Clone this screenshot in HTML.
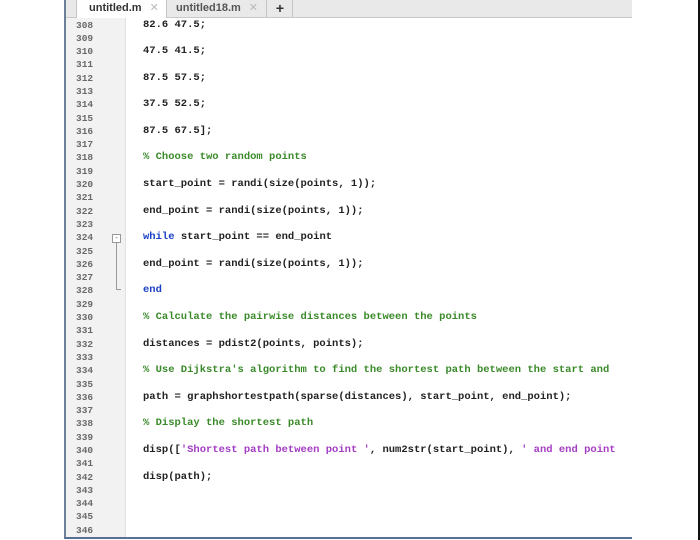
<!DOCTYPE html><html><head><style>
body{margin:0;width:700px;height:540px;background:#fff;position:relative;overflow:hidden;font-family:"Liberation Mono",monospace}
.frame{position:absolute;left:64px;top:0;width:567px;height:537px;border-left:2px solid #6d7f99;border-bottom:2px solid #5a6f94;border-right:1px solid #c8ccd2}
.tabs{position:absolute;left:66px;top:0;width:566px;height:17px;background:#e9e9e9;border-bottom:1px solid #c9c9c9}
.tab{position:absolute;top:0;height:17px;font:bold 11px "Liberation Sans",sans-serif;color:#333;line-height:16px;border-right:1px solid #c4c4c4}
.x{color:#bbb;font-weight:normal;margin-left:8px}
.gut{position:absolute;left:66px;top:18px;width:59px;height:519px;background:#f2f2f2;border-right:1px solid #e2e2e2}
.ln{position:absolute;left:76px;font-size:9.5px;font-weight:bold;color:#6a6a6a;line-height:13.3px}
.code{position:absolute;left:143px;font-size:10.5px;font-weight:bold;color:#222;white-space:pre;line-height:13.3px}
.c{color:#3a8a2a}.k{color:#1a3fc4}.s{color:#a43cc4}
</style></head><body>
<div class="frame"></div>
<div class="tabs">
<div class="tab" style="left:10px;width:91px;background:#fff;padding-left:12px;box-sizing:border-box;border-left:1px solid #c4c4c4;height:18px">untitled.m<span class="x">✕</span></div>
<div class="tab" style="left:101px;width:100px;padding-left:9px;box-sizing:border-box;color:#555">untitled18.m<span class="x">✕</span></div>
<div class="tab" style="left:202px;width:24px;text-align:center;font-size:14px">+</div>
</div>
<div class="gut"></div>
<div class="ln" style="top:18.5px">308<br>309<br>310<br>311<br>312<br>313<br>314<br>315<br>316<br>317<br>318<br>319<br>320<br>321<br>322<br>323<br>324<br>325<br>326<br>327<br>328<br>329<br>330<br>331<br>332<br>333<br>334<br>335<br>336<br>337<br>338<br>339<br>340<br>341<br>342<br>343<br>344<br>345<br>346</div>
<div style="position:absolute;left:112px;top:234px;width:7px;height:7px;border:1px solid #999;background:#fff;font-size:8px;line-height:7px;text-align:center;color:#777">-</div>
<div style="position:absolute;left:116px;top:243px;width:4px;height:46px;border-left:1px solid #999;border-bottom:1px solid #999"></div>
<div class="code" style="top:18.5px">82.6 47.5;

47.5 41.5;

87.5 57.5;

37.5 52.5;

87.5 67.5];

<span class="c">% Choose two random points</span>

start_point = randi(size(points, 1));

end_point = randi(size(points, 1));

<span class="k">while</span> start_point == end_point

end_point = randi(size(points, 1));

<span class="k">end</span>

<span class="c">% Calculate the pairwise distances between the points</span>

distances = pdist2(points, points);

<span class="c">% Use Dijkstra's algorithm to find the shortest path between the start and </span>

path = graphshortestpath(sparse(distances), start_point, end_point);

<span class="c">% Display the shortest path</span>

disp([<span class="s">'Shortest path between point '</span>, num2str(start_point), <span class="s">' and end point</span>

disp(path);</div>
<div style="position:absolute;left:632px;top:0;width:66px;height:540px;background:#fff"></div>
<div style="position:absolute;left:698px;top:0;width:2px;height:540px;background:#111"></div>
</body></html>
